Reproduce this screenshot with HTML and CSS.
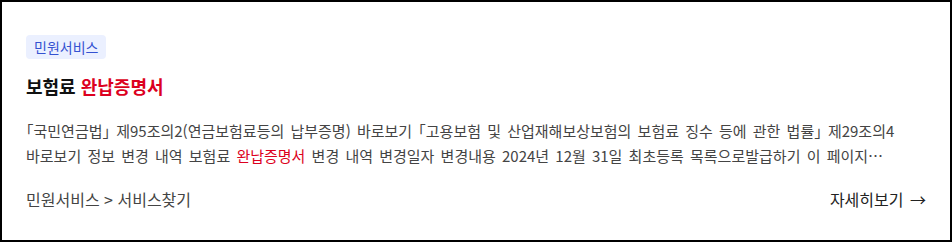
FILE: index.html
```
<!DOCTYPE html>
<html lang="ko">
<head>
	<meta charset="utf-8">
	<meta name="viewport" content="width=device-width, initial-scale=1">
	<title>보험료 완납증명서</title>
	<link rel="stylesheet" href="styles.css">
</head>
<body>
	<div class="card">
		<span class="badge">민원서비스</span>
		<h3 class="title">보험료 <em>완납증명서</em></h3>
		<p class="desc">「국민연금법」 제95조의2(연금보험료등의 납부증명) 바로보기 「고용보험 및 산업재해보상보험의 보험료 징수 등에 관한 법률」 제29조의4 바로보기 정보 변경 내역 보험료 <em>완납증명서</em> 변경 내역 변경일자 변경내용 2024년 12월 31일 최초등록 목록으로발급하기 이 페이지…</p>
		<div class="foot">
			<span class="path">민원서비스 &gt; 서비스찾기</span>
			<a class="more" href="#">자세히보기 <span class="arrow">&rarr;</span></a>
		</div>
	</div>
</body>
</html>
```

FILE: styles.css
```
* {
	margin: 0;
	padding: 0;
	box-sizing: border-box;
}
body {
	font-family: "Noto Sans CJK KR", "Noto Sans", sans-serif;
	color: #222;
	background: #fff;
}
.card {
	width: 952px;
	height: 242px;
	border: 2px solid #000;
	padding: 33px 24px 0 24px;
	display: flex;
	flex-direction: column;
	align-items: flex-start;
}
.badge {
	display: inline-block;
	height: 24px;
	line-height: 24px;
	padding: 0 8px;
	font-size: 14px;
	color: #3452d1;
	background: #ebf0ff;
	border-radius: 4px;
}
.title {
	margin-top: 14px;
	font-size: 18px;
	font-weight: 700;
	line-height: 26px;
	color: #111;
}
.title em, .desc em {
	font-style: normal;
	color: #dc0020;
}
.desc {
	margin-top: 19px;
	font-size: 15px;
	line-height: 25px;
	color: #444;
	word-break: keep-all;
	word-spacing: 2px;
	font-feature-settings: "halt";
	display: -webkit-box;
	-webkit-line-clamp: 2;
	-webkit-box-orient: vertical;
	overflow: hidden;
}
.foot {
	margin-top: 20px;
	width: 100%;
	display: flex;
	justify-content: space-between;
	align-items: center;
	font-size: 16px;
	line-height: 22px;
}
.path {
	color: #444;
}
.more {
	color: #222;
	text-decoration: none;
}
.arrow {
	margin-left: 2px;
}
```
